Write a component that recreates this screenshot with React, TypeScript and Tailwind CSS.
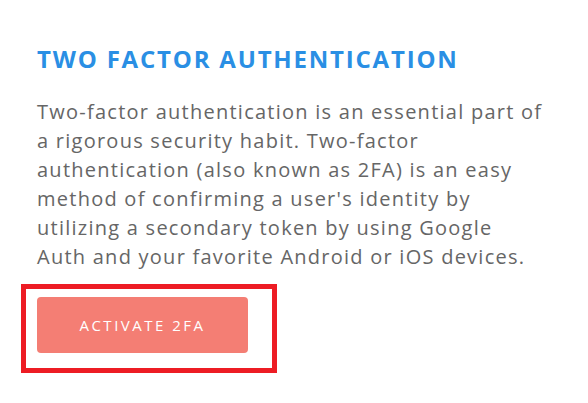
import React from 'react';

const lines = [
  'Two-factor authentication is an essential part of',
  'a rigorous security habit. Two-factor',
  'authentication (also known as 2FA) is an easy',
  "method of confirming a user's identity by",
  'utilizing a secondary token by using Google',
  'Auth and your favorite Android or iOS devices.',
];

export default function App() {
  return (
    <div className="w-[588px] h-[403px] bg-white overflow-hidden font-['Open_Sans',sans-serif]">
      <div className="pl-[37px] pt-[43px]">
        {/* Heading */}
        <h2 className="text-[24px] leading-[32px] font-bold text-[#2a8fe4] tracking-[1.8px]">
          TWO FACTOR AUTHENTICATION
        </h2>

        {/* Description */}
        <p className="mt-[22px] w-[540px] text-[20px] leading-[29px] tracking-[1.25px] text-[#666666]">
          {lines.map((line, i) => (
            <React.Fragment key={i}>
              {line}
              {i < lines.length - 1 && <br />}
            </React.Fragment>
          ))}
        </p>

        {/* Activate button, outlined */}
        <div className="mt-[13px] -ml-4 w-[256px] border-[5px] border-[#ed1c24] pl-[11px] pt-[8px] pb-[15px]">
          <button className="w-[211px] h-[56px] rounded-[4px] bg-[#f47e74] text-white text-[15px] tracking-[2.5px]">
            ACTIVATE 2FA
          </button>
        </div>
      </div>
    </div>
  );
}
